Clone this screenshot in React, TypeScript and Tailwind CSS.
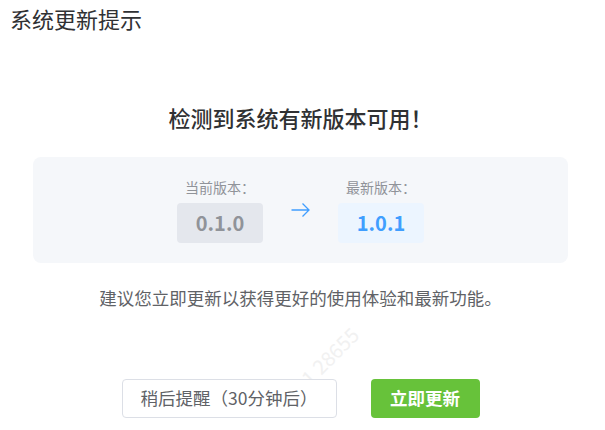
// =============================================================================
// UPDATE PROMPT — system update notice dialog body
// =============================================================================

const FONT = "font-['Noto_Sans_CJK_SC','Noto_Sans',sans-serif]";

function VersionColumn({
  label,
  version,
  latest,
}: {
  label: string;
  version: string;
  latest?: boolean;
}) {
  return (
    <div className="flex w-[86px] flex-col items-center">
      <span className="whitespace-nowrap text-[14px] leading-[20px] text-[#909399]">
        {label}
      </span>
      <div
        className={
          latest
            ? "mt-[6px] flex h-[40px] w-[86px] items-center justify-center rounded-[4px] bg-[#ecf5ff] text-[20px] font-bold text-[#409eff]"
            : "mt-[6px] flex h-[40px] w-[86px] items-center justify-center rounded-[4px] bg-[#e4e7ed] text-[20px] font-bold text-[#909399]"
        }
      >
        {version}
      </div>
    </div>
  );
}

export default function App() {
  return (
    <div className={`relative h-[430px] w-[605px] overflow-hidden bg-white ${FONT}`}>
      {/* Watermark */}
      <span className="absolute left-[296px] top-[384px] origin-[0_100%] -rotate-[45deg] whitespace-nowrap text-[20px] leading-none text-[#f1f1f1]">
        001 28655
      </span>

      <div className="relative w-[601px]">
        <h2 className="px-[10px] pt-[2px] text-[22px] leading-[32px] text-[#303133]">
          系统更新提示
        </h2>

        <p className="mt-[67px] text-center text-[22px] font-medium leading-[32px] text-[#303133]">
          检测到系统有新版本可用！
        </p>

        {/* Version comparison */}
        <div className="mx-[33px] mt-[24px] flex items-center justify-center gap-[28px] rounded-[8px] bg-[#f5f7fa] py-5">
          <VersionColumn label="当前版本：" version="0.1.0" />
          <svg width="19" height="14" viewBox="0 0 19 14" fill="none" className="shrink-0">
            <path
              d="M0.5 7H18M11.5 0.5L18 7L11.5 13.5"
              stroke="#409eff"
              strokeWidth="1.3"
            />
          </svg>
          <VersionColumn label="最新版本：" version="1.0.1" latest />
        </div>

        <p className="mt-[22px] text-center text-[17.5px] leading-[26px] text-[#606266]">
          建议您立即更新以获得更好的使用体验和最新功能。
        </p>

        {/* Actions */}
        <div className="mt-[68px] flex justify-center gap-[34px]">
          <button className="flex h-[39px] w-[215px] items-center justify-center rounded-[4px] border border-[#dcdfe6] bg-white text-[17.5px] text-[#606266]">
            稍后提醒（30分钟后）
          </button>
          <button className="flex h-[39px] w-[109px] items-center justify-center rounded-[4px] bg-[#67c23a] text-[17.5px] font-semibold text-white">
            立即更新
          </button>
        </div>
      </div>
    </div>
  );
}
